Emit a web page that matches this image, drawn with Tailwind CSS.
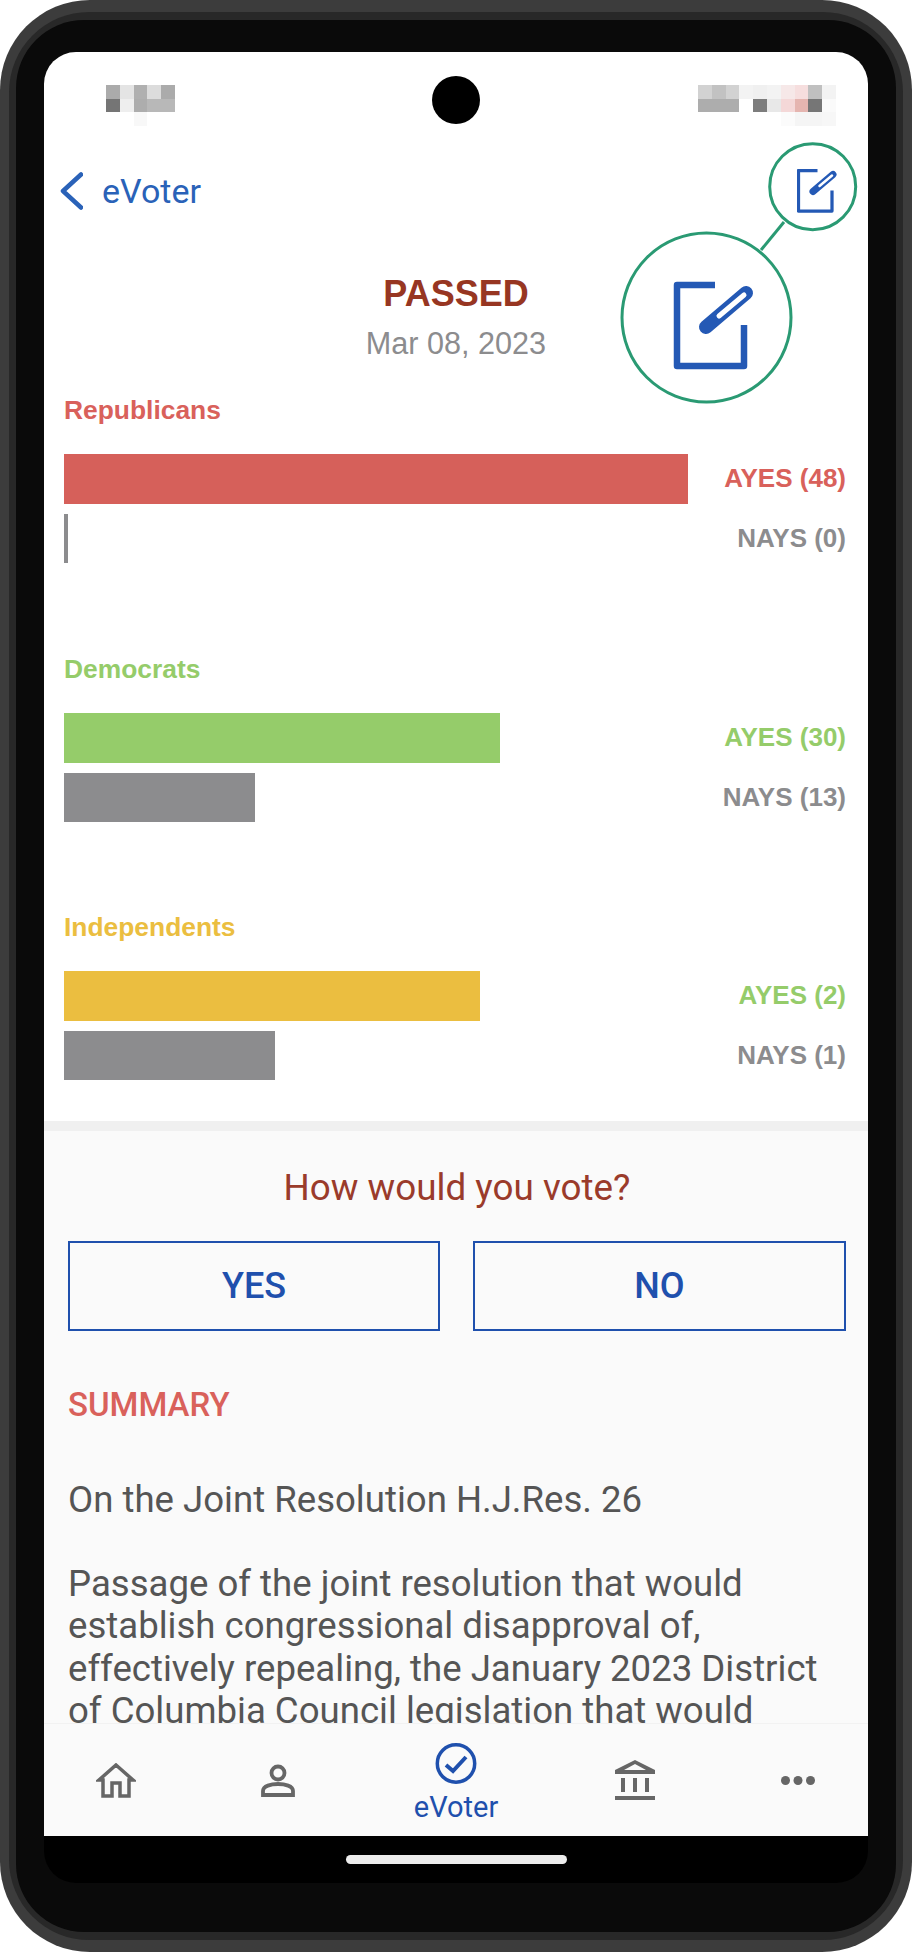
<!DOCTYPE html>
<html lang="en">
<head>
    <meta charset="UTF-8">
    <title>eVoter</title>
    <script src="https://cdn.jsdelivr.net/npm/@tailwindcss/browser@4"></script>
</head>
<body class="bg-white">
<div class="w-[912px] h-[1952px] bg-[#3c3c3c] rounded-[90px] py-[12px] px-[9px] overflow-hidden">
    <div class="h-full bg-[#282828] rounded-[80px] py-[8px] px-[7px]">
        <div class="h-full bg-[#0a0a0a] rounded-[68px] pt-[32px] px-[28px]">
            <div class="relative w-[824px] h-[1831px] bg-black rounded-[32px] overflow-hidden">
                <!-- app screen -->
                <div class="w-full h-[1784px] flex flex-col bg-white font-['Liberation_Sans',sans-serif]">
                    <div class="h-[114px] flex justify-between pl-[62px] pr-[32px] pt-[33px] shrink-0">
                        <div class="grid grid-cols-5 grid-rows-3 w-[69px] h-[41px]">
                            <span class="bg-[#ababab]"></span><span class="bg-[#e4e4e4]"></span><span class="bg-[#b0b0b0]"></span><span class="bg-[#dcdcdc]"></span><span class="bg-[#ababab]"></span>
                            <span class="bg-[#757575]"></span><span class="bg-[#eeeeee]"></span><span class="bg-[#adadad]"></span><span class="bg-[#b8b8b8]"></span><span class="bg-[#b8b8b8]"></span>
                            <span></span><span></span><span class="bg-[#f8f8f8]"></span><span></span><span></span>
                        </div>
                        <div class="grid grid-cols-10 grid-rows-3 w-[138px] h-[41px]">
                            <span class="bg-[#d2d2d2]"></span><span class="bg-[#c2c2c2]"></span><span class="bg-[#d2d2d2]"></span><span class="bg-[#f3f3f3]"></span><span class="bg-[#f0f0f0]"></span><span class="bg-[#f3f3f3]"></span><span class="bg-[#f6e8e8]"></span><span class="bg-[#f6dede]"></span><span class="bg-[#c0c0c0]"></span><span class="bg-[#f3f3f3]"></span>
                            <span class="bg-[#adadad]"></span><span class="bg-[#adadad]"></span><span class="bg-[#adadad]"></span><span class="bg-white"></span><span class="bg-[#7d7d7d]"></span><span class="bg-[#e8e8e8]"></span><span class="bg-[#f4d8d8]"></span><span class="bg-[#e5b5b0]"></span><span class="bg-[#767676]"></span><span class="bg-[#fafafa]"></span>
                            <span></span><span></span><span></span><span></span><span></span><span></span><span class="bg-[#fbfbfb]"></span><span class="bg-[#f5f5f5]"></span><span class="bg-[#f5f5f5]"></span><span class="bg-[#f7f7f7]"></span>
                        </div>
                    </div>
                    <div class="h-[50px] flex items-center justify-between pl-[16px] pr-[31px] shrink-0 font-['Roboto',sans-serif] text-[#2a62b8] text-[34px]">
                        <div class="flex items-center gap-[19px]">
                            <svg class="w-[23px] h-[38px]" viewBox="0 0 23 38" fill="none" stroke="currentColor" stroke-width="4.5" stroke-linecap="round" stroke-linejoin="round"><path d="M21 2.5 L3 19 L21 35.5"/></svg>
                            <span>eVoter</span>
                        </div>
                        <svg class="w-[40px] h-[43.5px]" viewBox="0 0 80 87" fill="none">
                            <path d="M41 3 H3 V84 H70 V43" stroke="#2459b5" stroke-width="6.5" stroke-linejoin="round"/>
                            <path d="M32 45 L72 11" stroke="#2459b5" stroke-width="14" stroke-linecap="round"/>
                            <path d="M45 34 L70 13" stroke="white" stroke-width="5" stroke-linecap="round"/>
                        </svg>
                    </div>
                    <div class="mt-[56px] text-center">
                        <p class="text-[#973622] text-[36px] leading-[44px] font-bold">PASSED</p>
                        <p class="text-[#8c8c8e] text-[30.6px] leading-[36px] mt-[9px]">Mar 08, 2023</p>
                    </div>

                    <div class="mt-[34px] pl-[20px] pr-[22px] pb-[41px]">
                        <p class="text-[#d9615b] text-[26.4px] leading-[30px] font-bold">Republicans</p>
                        <div class="mt-[29px] flex flex-col gap-[10px]">
                            <div class="flex items-center justify-between h-[49.5px]">
                                <div class="h-full bg-[#d6605a] w-[624px]"></div>
                                <span class="text-[#d9615b] text-[26px] font-bold">AYES (48)</span>
                            </div>
                            <div class="flex items-center justify-between h-[49.5px]">
                                <div class="h-full bg-[#8c8c8e] w-[4px]"></div>
                                <span class="text-[#8c8c8e] text-[26px] font-bold">NAYS (0)</span>
                            </div>
                        </div>
                        <p class="mt-[91px] text-[#95cc6a] text-[26.4px] leading-[30px] font-bold">Democrats</p>
                        <div class="mt-[29px] flex flex-col gap-[10px]">
                            <div class="flex items-center justify-between h-[49.5px]">
                                <div class="h-full bg-[#95cc6a] w-[436px]"></div>
                                <span class="text-[#95cc6a] text-[26px] font-bold">AYES (30)</span>
                            </div>
                            <div class="flex items-center justify-between h-[49.5px]">
                                <div class="h-full bg-[#8c8c8e] w-[191px]"></div>
                                <span class="text-[#8c8c8e] text-[26px] font-bold">NAYS (13)</span>
                            </div>
                        </div>
                        <p class="mt-[90px] text-[#ebbe40] text-[26.4px] leading-[30px] font-bold">Independents</p>
                        <div class="mt-[29px] flex flex-col gap-[10px]">
                            <div class="flex items-center justify-between h-[49.5px]">
                                <div class="h-full bg-[#ebbe40] w-[416px]"></div>
                                <span class="text-[#95cc6a] text-[26px] font-bold">AYES (2)</span>
                            </div>
                            <div class="flex items-center justify-between h-[49.5px]">
                                <div class="h-full bg-[#8c8c8e] w-[211px]"></div>
                                <span class="text-[#8c8c8e] text-[26px] font-bold">NAYS (1)</span>
                            </div>
                        </div>
                    </div>

                    <div class="flex-1 min-h-0 overflow-hidden border-t-[10px] border-[#f0f0f0] bg-[#fafafa] font-['Roboto',sans-serif] pl-[24px] pr-[22px]">
                        <p class="mt-[35px] text-center text-[#9a3b2b] text-[36.8px] leading-[44px]">How would you vote?</p>
                        <div class="mt-[31px] flex gap-[33px]">
                            <button class="w-[372px] h-[90px] border-2 border-[#1f50ad] text-[#1f50ad] text-[36px] font-medium">YES</button>
                            <button class="w-[373px] h-[90px] border-2 border-[#1f50ad] text-[#1f50ad] text-[36px] font-medium">NO</button>
                        </div>
                        <p class="mt-[54px] text-[#d9615b] text-[33px] leading-[40px] font-medium">SUMMARY</p>
                        <p class="mt-[54px] text-[#555555] text-[36.6px] leading-[42px]">On the Joint Resolution H.J.Res. 26</p>
                        <p class="mt-[42px] text-[#555555] text-[36.6px] leading-[42.3px]">Passage of the joint resolution that would establish congressional disapproval of, effectively repealing, the January 2023 District of Columbia Council legislation that would</p>
                    </div>
                    <nav class="h-[113px] shrink-0 bg-[#fafafa] border-t border-[#f2f2f2] grid grid-cols-[144px_179px_178px_180px_143px] font-['Roboto',sans-serif]">
                        <div class="flex items-center justify-center"><svg class="w-[40px] h-[35px]" viewBox="0 0 40 35" fill="none" stroke="#666666" stroke-width="3.5"><path d="M20 2 L37 17 H33 V33 H24 V20 H16 V33 H7 V17 H3 Z"/></svg></div>
                        <div class="flex items-center justify-center"><svg class="w-[34px] h-[33px]" viewBox="0 0 34 33" fill="none" stroke="#666666" stroke-width="3.8"><circle cx="17" cy="9" r="6.5"/><path d="M2 31 V27 C2 22 10 20 17 20 C24 20 32 22 32 27 V31 Z"/></svg></div>
                        <div class="flex flex-col items-center pt-[19px]">
                            <svg class="w-[42px] h-[41px]" viewBox="0 0 42 41" fill="none" stroke="#1f50ad"><circle cx="21" cy="20.5" r="18.7" stroke-width="3.5"/><path d="M11 22 L18 28 L31 14" stroke-width="4"/></svg>
                            <span class="mt-[7px] text-[#1f50ad] text-[29px] leading-[32px]">eVoter</span>
                        </div>
                        <div class="flex items-center justify-center"><svg class="w-[40px] h-[40px]" viewBox="0 0 40 40" fill="#666666"><path fill-rule="evenodd" d="M20 0 L40 10 V14 H0 V10 Z M20 4 L9 10 H31 Z"/><rect x="6" y="18" width="4" height="14"/><rect x="18" y="18" width="4" height="14"/><rect x="30" y="18" width="4" height="14"/><rect y="36" width="40" height="4"/></svg></div>
                        <div class="flex items-center justify-center pl-[3px]"><svg class="w-[34px] h-[9px]" viewBox="0 0 34 9" fill="#666666"><circle cx="4.5" cy="4.5" r="4.5"/><circle cx="17" cy="4.5" r="4.5"/><circle cx="29.5" cy="4.5" r="4.5"/></svg></div>
                    </nav>
                </div>
                <div class="flex justify-center pt-[19px]"><div class="w-[221px] h-[9px] bg-[#ededed] rounded-full"></div></div>

                <!-- camera -->
                <div class="absolute left-[388px] top-[24px] w-[48px] h-[48px] rounded-full bg-black"></div>

                <!-- callout over the header icon -->
                <svg class="absolute left-[570px] top-[80px] w-[254px] h-[280px]" viewBox="0 0 254 280" fill="none">
                    <path d="M170 90 L147 118" stroke="#2a9a73" stroke-width="3"/>
                    <circle cx="198.7" cy="54.7" r="43" stroke="#2a9a73" stroke-width="3"/>
                    <circle cx="92.5" cy="185.5" r="84.5" stroke="#2a9a73" stroke-width="3"/>
                    <g transform="translate(60 150)">
                        <path d="M41 3 H3 V84 H70 V43" stroke="#2459b5" stroke-width="6.5" stroke-linejoin="round"/>
                        <path d="M32 45 L72 11" stroke="#2459b5" stroke-width="14" stroke-linecap="round"/>
                        <path d="M45 34 L70 13" stroke="white" stroke-width="5" stroke-linecap="round"/>
                    </g>
                </svg>
            </div>
        </div>
    </div>
</div>
</body>
</html>
